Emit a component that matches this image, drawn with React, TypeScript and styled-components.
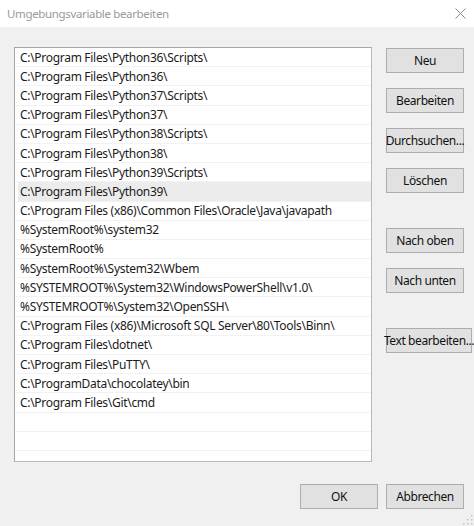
import React from "react";
import styled, { createGlobalStyle } from "styled-components";

const Global = createGlobalStyle`
  html, body { margin: 0; padding: 0; }
  body {
    width: 474px;
    height: 526px;
    overflow: hidden;
    background: #f0f0f0;
    font-family: "Noto Sans", "Open Sans", sans-serif;
    font-size: 12px;
    color: #000;
  }
`;

const Window = styled.div`
  width: 474px;
  height: 526px;
  display: flex;
  flex-direction: column;
  background: #f0f0f0;
  position: relative;
`;

const TitleBar = styled.div`
  height: 27px;
  background: #ffffff;
  display: flex;
  align-items: center;
  justify-content: space-between;
  padding: 0 8px 0 7px;
  box-sizing: border-box;
`;

const Title = styled.span`
  color: #9a9a9a;
  font-size: 11.5px;
  letter-spacing: -0.35px;
`;

const Close = styled.svg`
  width: 11px;
  height: 11px;
`;

const Body = styled.div`
  display: flex;
  flex-direction: column;
  padding: 20px 10px 0 14px;
`;

const Main = styled.div`
  display: flex;
  gap: 14px;
`;

const List = styled.div`
  width: 358px;
  height: 415px;
  flex: 0 0 358px;
  box-sizing: border-box;
  background: #ffffff;
  border: 1px solid #a7a7a7;
  border-right-color: #b9b9b9;
  border-bottom-color: #b9b9b9;
  display: flex;
  flex-direction: column;
  overflow: hidden;
`;

const Row = styled.div<{ $selected?: boolean }>`
  height: 19.2px;
  flex: 0 0 19.2px;
  box-sizing: border-box;
  border-bottom: 1px solid #f2f2f2;
  padding-left: 5px;
  display: flex;
  align-items: center;
  white-space: nowrap;
  color: #1b1b1b;
  font-size: 12px;
  letter-spacing: -0.3px;
  background: ${(p) =>
    p.$selected
      ? "linear-gradient(to right, transparent 3px, #ececec 3px)"
      : "transparent"};
`;

const Buttons = styled.div`
  display: flex;
  flex-direction: column;
  width: 78px;
  flex: 0 0 78px;
  padding-top: 1px;
`;

const Button = styled.button<{ $top?: number; $wide?: boolean }>`
  width: ${(p) => (p.$wide ? "86px" : "78px")};
  flex: 0 0 auto;
  height: 25px;
  margin-top: ${(p) => p.$top ?? 0}px;
  box-sizing: border-box;
  background: #e1e1e1;
  border: 1px solid #adadad;
  font-family: "Noto Sans", "Open Sans", sans-serif;
  font-size: 12px;
  letter-spacing: -0.4px;
  color: #111;
  padding: 0;
  display: flex;
  align-items: center;
  justify-content: center;
  white-space: nowrap;
`;

const Footer = styled.div`
  display: flex;
  justify-content: flex-end;
  gap: 8px;
  margin-top: 22px;
`;

const Grip = styled.svg`
  position: absolute;
  right: 1px;
  bottom: 1px;
  width: 11px;
  height: 11px;
`;

const paths = [
  "C:\\Program Files\\Python36\\Scripts\\",
  "C:\\Program Files\\Python36\\",
  "C:\\Program Files\\Python37\\Scripts\\",
  "C:\\Program Files\\Python37\\",
  "C:\\Program Files\\Python38\\Scripts\\",
  "C:\\Program Files\\Python38\\",
  "C:\\Program Files\\Python39\\Scripts\\",
  "C:\\Program Files\\Python39\\",
  "C:\\Program Files (x86)\\Common Files\\Oracle\\Java\\javapath",
  "%SystemRoot%\\system32",
  "%SystemRoot%",
  "%SystemRoot%\\System32\\Wbem",
  "%SYSTEMROOT%\\System32\\WindowsPowerShell\\v1.0\\",
  "%SYSTEMROOT%\\System32\\OpenSSH\\",
  "C:\\Program Files (x86)\\Microsoft SQL Server\\80\\Tools\\Binn\\",
  "C:\\Program Files\\dotnet\\",
  "C:\\Program Files\\PuTTY\\",
  "C:\\ProgramData\\chocolatey\\bin",
  "C:\\Program Files\\Git\\cmd",
  "",
  "",
  "",
];

export default function App() {
  return (
    <Window>
      <Global />
      <TitleBar>
        <Title>Umgebungsvariable bearbeiten</Title>
        <Close viewBox="0 0 11 11">
          <path d="M0.5 0.5 L10.5 10.5 M10.5 0.5 L0.5 10.5" stroke="#8a8a8a" strokeWidth="1" />
        </Close>
      </TitleBar>
      <Body>
        <Main>
          <List>
            {paths.map((p, i) => (
              <Row key={i} $selected={i === 7}>
                {p}
              </Row>
            ))}
          </List>
          <Buttons>
            <Button>Neu</Button>
            <Button $top={15}>Bearbeiten</Button>
            <Button $top={15}>Durchsuchen...</Button>
            <Button $top={15}>Löschen</Button>
            <Button $top={35}>Nach oben</Button>
            <Button $top={15}>Nach unten</Button>
            <Button $top={35} $wide>
              Text bearbeiten...
            </Button>
          </Buttons>
        </Main>
        <Footer>
          <Button>OK</Button>
          <Button>Abbrechen</Button>
        </Footer>
      </Body>
      <Grip viewBox="0 0 11 11">
        {[
          [9, 1], [9, 5], [5, 5], [9, 9], [5, 9], [1, 9],
        ].map(([x, y], i) => (
          <rect key={i} x={x} y={y} width="1.5" height="1.5" fill="#c4c4c4" />
        ))}
      </Grip>
    </Window>
  );
}
